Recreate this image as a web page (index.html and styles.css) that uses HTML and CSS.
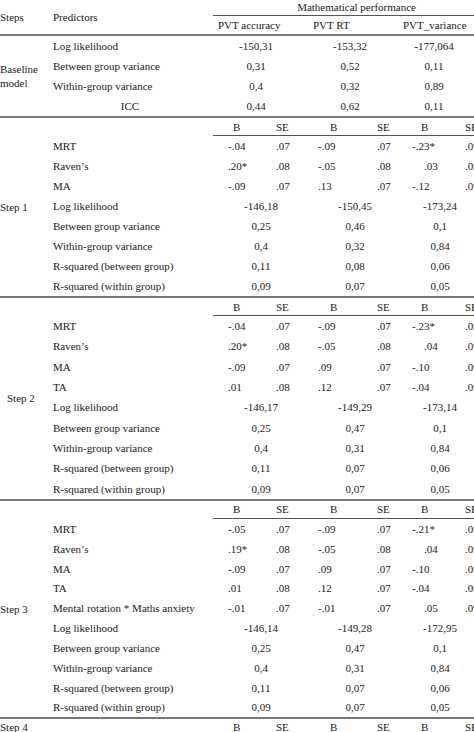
FILE: index.html
```html
<!DOCTYPE html>
<html>
<head>
<meta charset="utf-8">
<link rel="stylesheet" href="styles.css">
</head>
<body>
<table class="tbl">
  <colgroup>
    <col class="c-step"><col class="c-pred"><col class="c-b1"><col class="c-se1"><col class="c-b2"><col class="c-se2"><col class="c-b3"><col class="c-se3">
  </colgroup>
  <thead>
    <tr class="h1">
      <th rowspan="2" class="step">Steps</th>
      <th rowspan="2">Predictors</th>
      <th colspan="6" class="mp">Mathematical performance</th>
    </tr>
    <tr class="h2">
      <th colspan="2" class="pv1">PVT accuracy</th>
      <th colspan="2" class="pv2">PVT RT</th>
      <th colspan="2" class="pv3">PVT_variance</th>
    </tr>
  </thead>
  <tbody class="sec base">
    <tr><td rowspan="4" class="step">Baseline<br>model</td><td>Log likelihood</td><td colspan="2" class="m b1">-150,31</td><td colspan="2" class="m b2">-153,32</td><td colspan="2" class="m b3">-177,064</td></tr>
    <tr><td>Between group variance</td><td colspan="2" class="m b1">0,31</td><td colspan="2" class="m b2">0,52</td><td colspan="2" class="m b3">0,11</td></tr>
    <tr><td>Within-group variance</td><td colspan="2" class="m b1">0,4</td><td colspan="2" class="m b2">0,32</td><td colspan="2" class="m b3">0,89</td></tr>
    <tr><td class="icc">ICC</td><td colspan="2" class="m b1">0,44</td><td colspan="2" class="m b2">0,62</td><td colspan="2" class="m b3">0,11</td></tr>
  </tbody>
  <tbody class="sec">
    <tr class="bse"><td rowspan="9" class="step">Step 1</td><td></td><td class="hb1 ul">B</td><td class="ul">SE</td><td class="hb2 ul">B</td><td class="ul">SE</td><td class="hb3 ul">B</td><td class="ul">SE</td></tr>
    <tr><td>MRT</td><td class="v1">-.04</td><td>.07</td><td>-.09</td><td>.07</td><td>-.23*</td><td>.09</td></tr>
    <tr><td>Raven’s</td><td class="v1">.20*</td><td>.08</td><td>-.05</td><td>.08</td><td class="pos">.03</td><td>.09</td></tr>
    <tr><td>MA</td><td class="v1">-.09</td><td>.07</td><td>.13</td><td>.07</td><td>-.12</td><td>.09</td></tr>
    <tr><td>Log likelihood</td><td colspan="2" class="m g1">-146,18</td><td colspan="2" class="m g2">-150,45</td><td colspan="2" class="m g3">-173,24</td></tr>
    <tr><td>Between group variance</td><td colspan="2" class="m g1">0,25</td><td colspan="2" class="m g2">0,46</td><td colspan="2" class="m g3">0,1</td></tr>
    <tr><td>Within-group variance</td><td colspan="2" class="m g1">0,4</td><td colspan="2" class="m g2">0,32</td><td colspan="2" class="m g3">0,84</td></tr>
    <tr><td>R-squared (between group)</td><td colspan="2" class="m g1">0,11</td><td colspan="2" class="m g2">0,08</td><td colspan="2" class="m g3">0,06</td></tr>
    <tr><td>R-squared (within group)</td><td colspan="2" class="m g1">0,09</td><td colspan="2" class="m g2">0,07</td><td colspan="2" class="m g3">0,05</td></tr>
  </tbody>
  <tbody class="sec tall">
    <tr class="bse"><td rowspan="10" class="step s2">Step 2</td><td></td><td class="hb1 ul">B</td><td class="ul">SE</td><td class="hb2 ul">B</td><td class="ul">SE</td><td class="hb3 ul">B</td><td class="ul">SE</td></tr>
    <tr><td>MRT</td><td class="v1">-.04</td><td>.07</td><td>-.09</td><td>.07</td><td>-.23*</td><td>.09</td></tr>
    <tr><td>Raven’s</td><td class="v1">.20*</td><td>.08</td><td>-.05</td><td>.08</td><td class="pos">.04</td><td>.09</td></tr>
    <tr><td>MA</td><td class="v1">-.09</td><td>.07</td><td>.09</td><td>.07</td><td>-.10</td><td>.09</td></tr>
    <tr><td>TA</td><td class="v1">.01</td><td>.08</td><td>.12</td><td>.07</td><td>-.04</td><td>.09</td></tr>
    <tr><td>Log likelihood</td><td colspan="2" class="m g1">-146,17</td><td colspan="2" class="m g2">-149,29</td><td colspan="2" class="m g3">-173,14</td></tr>
    <tr><td>Between group variance</td><td colspan="2" class="m g1">0,25</td><td colspan="2" class="m g2">0,47</td><td colspan="2" class="m g3">0,1</td></tr>
    <tr><td>Within-group variance</td><td colspan="2" class="m g1">0,4</td><td colspan="2" class="m g2">0,31</td><td colspan="2" class="m g3">0,84</td></tr>
    <tr><td>R-squared (between group)</td><td colspan="2" class="m g1">0,11</td><td colspan="2" class="m g2">0,07</td><td colspan="2" class="m g3">0,06</td></tr>
    <tr><td>R-squared (within group)</td><td colspan="2" class="m g1">0,09</td><td colspan="2" class="m g2">0,07</td><td colspan="2" class="m g3">0,05</td></tr>
  </tbody>
  <tbody class="sec short">
    <tr class="bse"><td rowspan="11" class="step">Step 3</td><td></td><td class="hb1 ul">B</td><td class="ul">SE</td><td class="hb2 ul">B</td><td class="ul">SE</td><td class="hb3 ul">B</td><td class="ul">SE</td></tr>
    <tr><td>MRT</td><td class="v1">-.05</td><td>.07</td><td>-.09</td><td>.07</td><td>-.21*</td><td>.09</td></tr>
    <tr><td>Raven’s</td><td class="v1">.19*</td><td>.08</td><td>-.05</td><td>.08</td><td class="pos">.04</td><td>.09</td></tr>
    <tr><td>MA</td><td class="v1">-.09</td><td>.07</td><td>.09</td><td>.07</td><td>-.10</td><td>.09</td></tr>
    <tr><td>TA</td><td class="v1">.01</td><td>.08</td><td>.12</td><td>.07</td><td>-.04</td><td>.09</td></tr>
    <tr><td>Mental rotation * Maths anxiety</td><td class="v1">-.01</td><td>.07</td><td>-.01</td><td>.07</td><td class="pos">.05</td><td>.09</td></tr>
    <tr><td>Log likelihood</td><td colspan="2" class="m g1">-146,14</td><td colspan="2" class="m g2">-149,28</td><td colspan="2" class="m g3">-172,95</td></tr>
    <tr><td>Between group variance</td><td colspan="2" class="m g1">0,25</td><td colspan="2" class="m g2">0,47</td><td colspan="2" class="m g3">0,1</td></tr>
    <tr><td>Within-group variance</td><td colspan="2" class="m g1">0,4</td><td colspan="2" class="m g2">0,31</td><td colspan="2" class="m g3">0,84</td></tr>
    <tr><td>R-squared (between group)</td><td colspan="2" class="m g1">0,11</td><td colspan="2" class="m g2">0,07</td><td colspan="2" class="m g3">0,06</td></tr>
    <tr><td>R-squared (within group)</td><td colspan="2" class="m g1">0,09</td><td colspan="2" class="m g2">0,07</td><td colspan="2" class="m g3">0,05</td></tr>
  </tbody>
  <tbody class="sec">
    <tr class="bse last"><td class="step">Step 4</td><td></td><td class="hb1">B</td><td>SE</td><td class="hb2">B</td><td>SE</td><td class="hb3">B</td><td>SE</td></tr>
  </tbody>
</table>
</body>
</html>
```

FILE: styles.css
```css
html, body {
  margin: 0;
  padding: 0;
  overflow: hidden;
  background: #ffffff;
}

body {
  font-family: "Liberation Serif", "Times New Roman", serif;
  font-size: 11px;
  color: #1a1a1a;
}

.tbl {
  border-collapse: collapse;
  table-layout: fixed;
  width: 505px;
}

.c-step { width: 53px; }
.c-pred { width: 160px; }
.c-b1 { width: 63px; }
.c-se1 { width: 42px; }
.c-b2 { width: 59px; }
.c-se2 { width: 35px; }
.c-b3 { width: 53px; }
.c-se3 { width: 40px; }

.tbl th,
.tbl td {
  padding: 0;
  font-weight: normal;
  text-align: left;
  vertical-align: middle;
  white-space: nowrap;
  line-height: 14px;
}

.h1 th { height: 15px; }
.h2 th { height: 18px; }

.mp {
  text-align: center !important;
  padding-right: 5px !important;
  border-bottom: 1px solid #555;
  vertical-align: top !important;
}

.pv1 { padding-left: 5px !important; }
.pv2 { text-indent: -5px; }
.pv3 { text-indent: -9px; }

thead { border-bottom: 2px solid #777; }

.sec { border-top: 2px solid #777; }

.base td { height: 20.7px; }
.sec td { height: 20px; }
.sec.tall td { height: 20.33px; }
.sec.short td { height: 19.85px; }
.sec .bse td { height: 17px; }
.sec .last td { vertical-align: top; padding-top: 1px; }

.step { white-space: normal !important; }
.s2 { padding-left: 7px !important; }

.icc {
  text-align: center !important;
  padding-right: 6px !important;
}

.ul { border-bottom: 1px solid #555; }

.hb1 { padding-left: 20px !important; }
.hb2 { padding-left: 12px !important; }
.hb3 { padding-left: 9px !important; }

.v1 { padding-left: 15px !important; }
.pos { padding-left: 12px !important; }

.m { text-align: center !important; }
.g1 { padding-right: 9px !important; }
.g2 { padding-right: 20px !important; }
.g3 { padding-right: 37px !important; }
.b1 { padding-right: 19px !important; }
.b2 { padding-right: 30px !important; }
.b3 { padding-right: 49px !important; }
```
